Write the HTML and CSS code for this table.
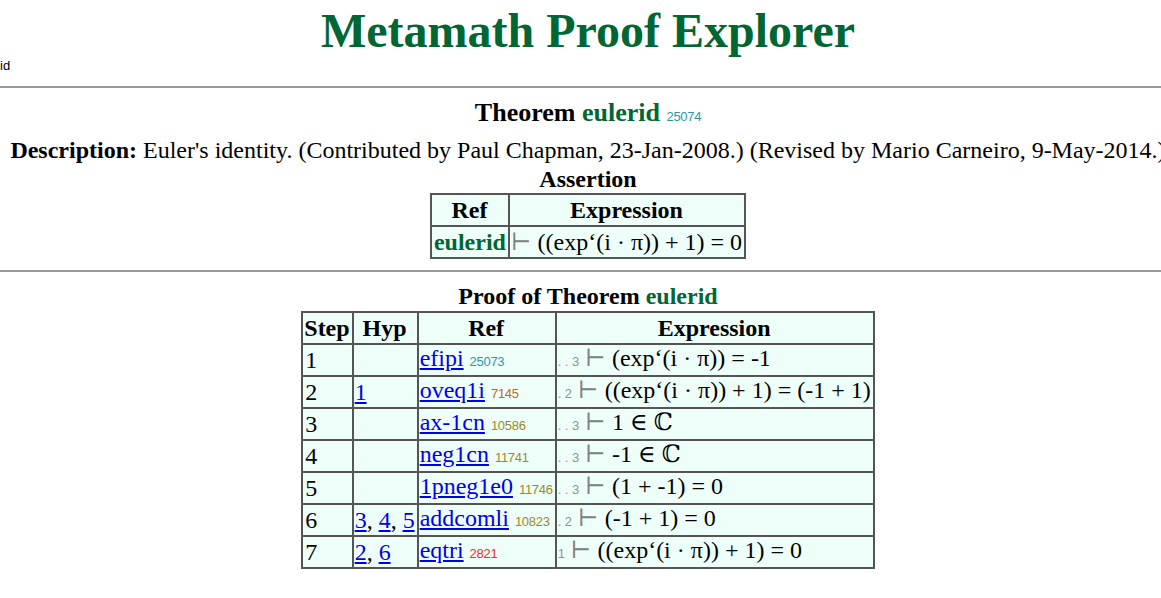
FILE: index.html
```html
<!DOCTYPE html>
<html lang="en">
<head>
    <meta charset="UTF-8">
    <title>eulerid - Metamath Proof Explorer</title>
    <link rel="stylesheet" href="styles.css">
</head>
<body>
<div class="page">

    <h1 class="site-title">Metamath Proof Explorer</h1>
    <div class="crumb">id</div>
    <hr>

    <div class="thm-title">Theorem <span class="label">eulerid</span> <span class="num n-teal">25074</span></div>
    <div class="desc"><b>Description:</b> Euler's identity. (Contributed by Paul Chapman, 23-Jan-2008.) (Revised by Mario Carneiro, 9-May-2014.)</div>

    <div class="caption">Assertion</div>
    <table class="mm">
        <tr><th>Ref</th><th>Expression</th></tr>
        <tr>
            <td class="label">eulerid</td>
            <td><span class="ts">&#8866;</span> ((exp&lsquo;(i &middot; &pi;)) + 1) = 0</td>
        </tr>
    </table>

    <hr class="sep">

    <div class="caption proof-cap">Proof of Theorem <span class="label">eulerid</span></div>
    <table class="mm">
        <tr><th>Step</th><th>Hyp</th><th>Ref</th><th>Expression</th></tr>
        <tr>
            <td>1</td><td></td>
            <td><a href="#">efipi</a> <span class="num n-teal">25073</span></td>
            <td><span class="lvl">. . 3</span> <span class="ts">&#8866;</span> (exp&lsquo;(i &middot; &pi;)) = -1</td>
        </tr>
        <tr>
            <td>2</td><td><a href="#">1</a></td>
            <td><a href="#">oveq1i</a> <span class="num n-orange">7145</span></td>
            <td><span class="lvl">. 2</span> <span class="ts">&#8866;</span> ((exp&lsquo;(i &middot; &pi;)) + 1) = (-1 + 1)</td>
        </tr>
        <tr>
            <td>3</td><td></td>
            <td><a href="#">ax-1cn</a> <span class="num n-olive">10586</span></td>
            <td><span class="lvl">. . 3</span> <span class="ts">&#8866;</span> 1 &isin; &#8450;</td>
        </tr>
        <tr>
            <td>4</td><td></td>
            <td><a href="#">neg1cn</a> <span class="num n-olive">11741</span></td>
            <td><span class="lvl">. . 3</span> <span class="ts">&#8866;</span> -1 &isin; &#8450;</td>
        </tr>
        <tr>
            <td>5</td><td></td>
            <td><a href="#">1pneg1e0</a> <span class="num n-olive">11746</span></td>
            <td><span class="lvl">. . 3</span> <span class="ts">&#8866;</span> (1 + -1) = 0</td>
        </tr>
        <tr>
            <td>6</td><td><a href="#">3</a>, <a href="#">4</a>, <a href="#">5</a></td>
            <td><a href="#">addcomli</a> <span class="num n-olive">10823</span></td>
            <td><span class="lvl">. 2</span> <span class="ts">&#8866;</span> (-1 + 1) = 0</td>
        </tr>
        <tr>
            <td>7</td><td><a href="#">2</a>, <a href="#">6</a></td>
            <td><a href="#">eqtri</a> <span class="num n-red">2821</span></td>
            <td><span class="lvl">1</span> <span class="ts">&#8866;</span> ((exp&lsquo;(i &middot; &pi;)) + 1) = 0</td>
        </tr>
    </table>

</div>
</body>
</html>
```

FILE: styles.css
```css
html, body {
    margin: 0;
    padding: 0;
    overflow: hidden;
    background: white;
}

body {
    font-family: "Liberation Serif", "DejaVu Serif", serif;
    font-size: 24px;
    color: black;
}

.page {
    width: 1176px;
    text-align: center;
}

.site-title {
    font-size: 48px;
    font-weight: bold;
    color: #006633;
    margin: 0;
    padding-top: 4px;
    line-height: 54px;
}

.crumb {
    text-align: left;
    font-family: "Liberation Sans", Arial, sans-serif;
    font-size: 13px;
    line-height: 15px;
    margin-top: 0;
}

hr {
    border: none;
    border-top: 2px solid #999;
    margin: 13px 0 0 0;
}

.sep {
    margin-top: 11px;
}

.thm-title {
    font-size: 26px;
    font-weight: bold;
    margin-top: 10px;
    line-height: 30px;
}

.label {
    color: #006633;
    font-weight: bold;
}

.num {
    font-family: "Liberation Sans", Arial, sans-serif;
    font-size: 13px;
    letter-spacing: -0.3px;
    font-weight: normal;
}

.n-teal { color: #2a98a4; }
.n-orange { color: #c8641a; }
.n-olive { color: #9c8a1c; }
.n-red { color: #fa2a1e; }

.desc {
    white-space: nowrap;
    line-height: 32px;
    margin-top: 2px;
}

.caption {
    font-weight: bold;
    line-height: 28px;
    margin-top: -1px;
}

.proof-cap {
    margin-top: 10px;
    margin-bottom: 1px;
}

table.mm {
    margin: 0 auto;
    border-collapse: separate;
    border-spacing: 0;
    border: 1px solid #555;
    background: #eefffa;
    text-align: left;
}

table.mm th,
table.mm td {
    border: 1px solid #555;
    padding: 0 2px 0 1px;
    height: 30px;
    line-height: 24px;
    white-space: nowrap;
    vertical-align: middle;
}

table.mm th {
    text-align: center;
    font-weight: bold;
}

table.mm td:first-child {
    padding-left: 2px;
}

a {
    color: #0000ee;
    text-decoration: underline;
}

.ts {
    color: #808080;
}

.lvl {
    font-family: "Liberation Sans", Arial, sans-serif;
    font-size: 13px;
    color: #909090;
}
```
